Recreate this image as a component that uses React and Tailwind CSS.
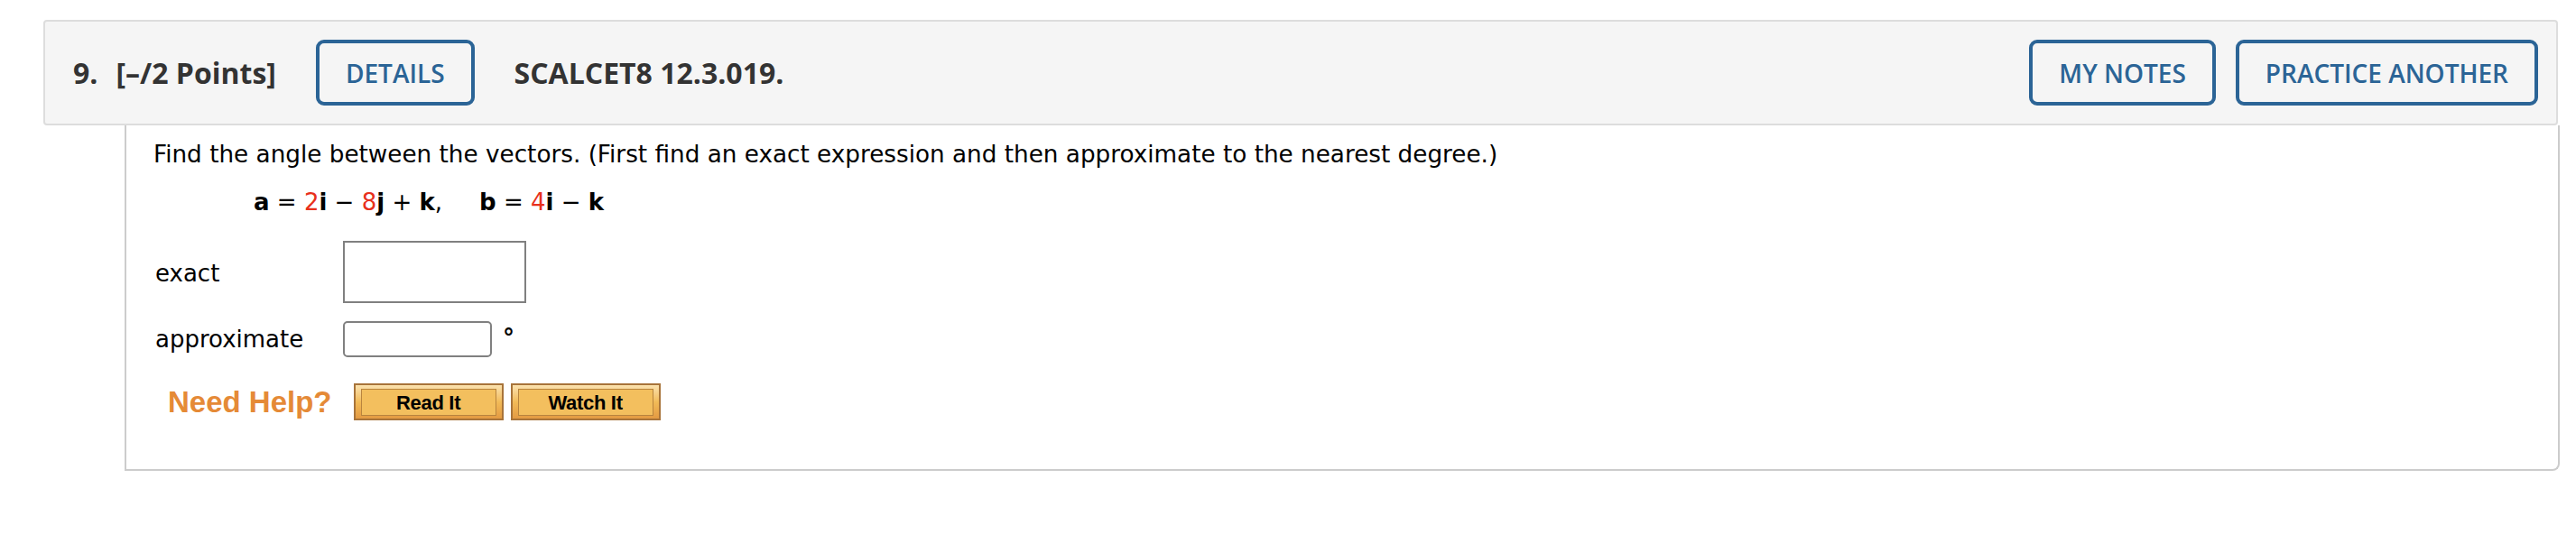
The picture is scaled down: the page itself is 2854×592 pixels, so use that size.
import React from "react";

const blueBtn =
  "h-[73px] px-[29px] border-[4px] border-[#2b6496] rounded-[9px] text-[#2b6496] text-[28px] font-semibold flex items-center";

function HelpButton({ label }) {
  return (
    <div className="w-[166px] h-[41px] border-2 border-[#a8743a] bg-gradient-to-b from-[#fbe2ae] via-[#f2bb58] to-[#e39a42] flex">
      <div className="flex-1 mx-[6px] mt-[4px] mb-[3px] border border-[#b8843e] bg-[#f3bf5e] flex items-center justify-center">
        <span className="text-[22px] font-bold text-black tracking-[-0.3px]" style={{ fontFamily: '"Liberation Sans", Arial, sans-serif' }}>
          {label}
        </span>
      </div>
    </div>
  );
}

export default function App() {
  const red = "text-[#e8301c] font-normal";

  return (
    <div className="w-full h-[592px] bg-white pt-[22px] pl-[48px] pr-[20px]">
      {/* question header */}
      <div
        className="h-[117px] bg-[#f5f5f5] border-2 border-[#dddddd] rounded-[4px] flex items-center pl-[31px] pr-[20px] text-[#333333]"
        style={{ fontFamily: '"Open Sans", sans-serif' }}
      >
        <span className="text-[32px] font-bold">9.</span>
        <span className="text-[32px] font-bold ml-[20px]">[–/2 Points]</span>
        <button className={blueBtn + " ml-[44px]"}>DETAILS</button>
        <span className="text-[32px] font-bold ml-[44px]">SCALCET8 12.3.019.</span>
        <div className="flex-1" />
        <button className={blueBtn}>MY NOTES</button>
        <button className={blueBtn + " ml-[22px]"}>PRACTICE ANOTHER</button>
      </div>

      {/* question body */}
      <div
        className="ml-[90px] mr-[-2px] h-[383px] border-x-2 border-b-2 border-[#cccccc] rounded-br-[8px] pl-[30px] text-black text-[26px]"
        style={{ fontFamily: '"DejaVu Sans", Verdana, sans-serif' }}
      >
        <p className="pt-[14px] leading-[36px] text-[26.25px]">
          Find the angle between the vectors. (First find an exact expression and then approximate to the nearest degree.)
        </p>

        <div className="mt-[17px] pl-[111px] leading-[36px] whitespace-pre">
          <b>a</b> = <span className={red}>2</span><b>i</b> − <span className={red}>8</span><b>j</b> + <b>k</b>,
          <span className="inline-block w-[41px]" />
          <b>b</b> = <span className={red}>4</span><b>i</b> − <b>k</b>
        </div>

        <div className="mt-[25px] grid grid-cols-[210px_auto] gap-y-[20px] items-center justify-start">
          <span className="leading-[36px] pl-[2px] pt-[3px]">exact</span>
          <input className="w-[203px] h-[69px] border-2 border-[#808080] bg-white outline-none" />
          <span className="leading-[36px] pl-[2px]">approximate</span>
          <div className="flex items-center">
            <input className="w-[165px] h-[40px] border-2 border-[#808080] rounded-[5px] bg-white outline-none" />
            <span className="ml-[12px] font-bold leading-[36px] mt-[-4px]">°</span>
          </div>
        </div>

        <div className="mt-[29px] pl-[16px] flex items-center">
          <span
            className="text-[33px] font-bold text-[#e58a37] mr-[24px] leading-none"
            style={{ fontFamily: '"Liberation Sans", Arial, sans-serif' }}
          >
            Need Help?
          </span>
          <HelpButton label="Read It" />
          <div className="w-[8px]" />
          <HelpButton label="Watch It" />
        </div>
      </div>
    </div>
  );
}
